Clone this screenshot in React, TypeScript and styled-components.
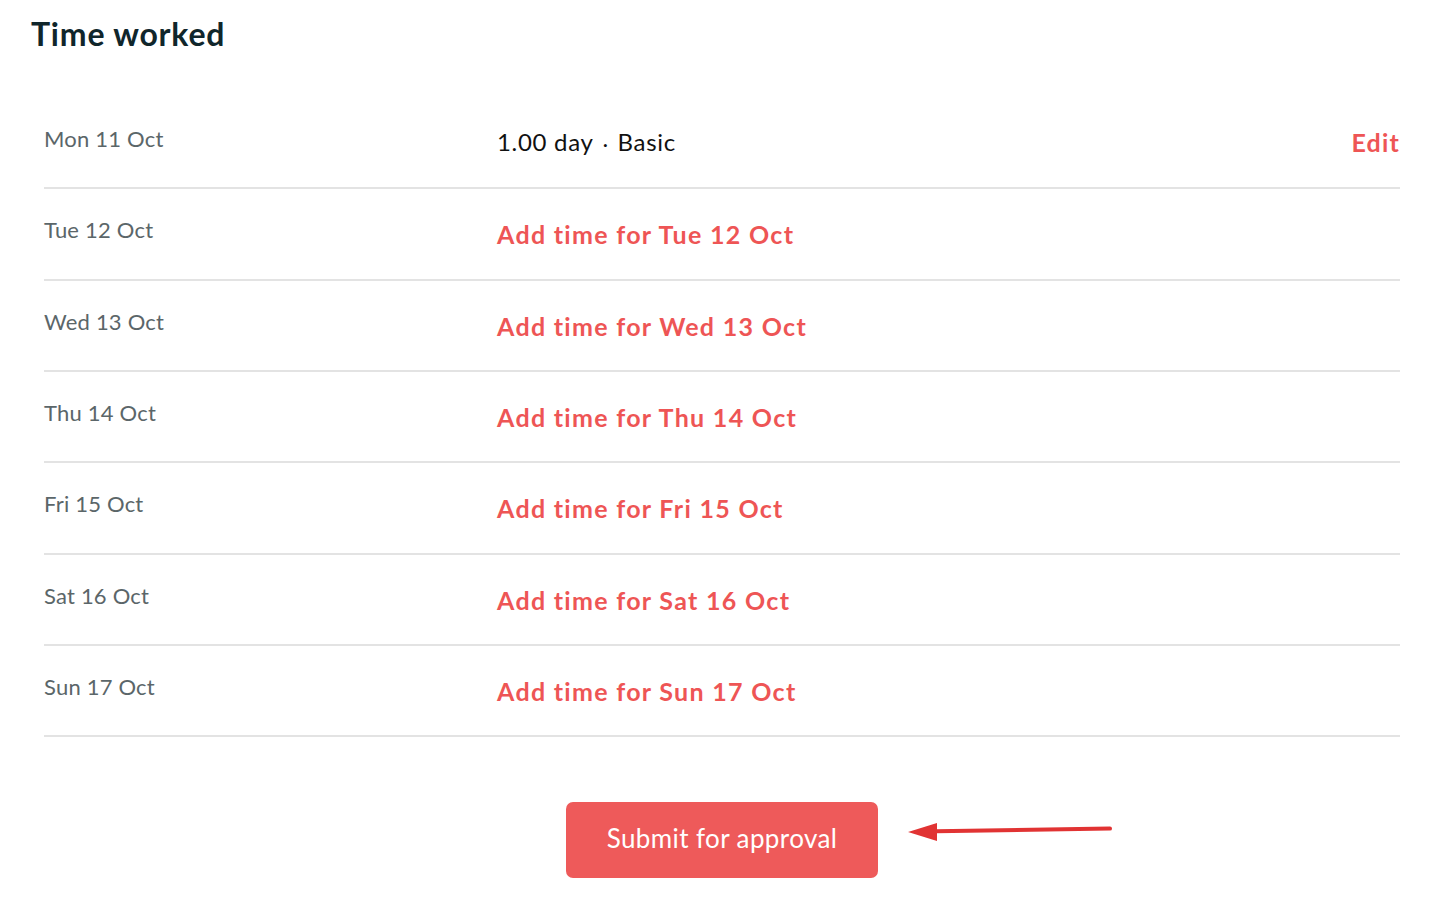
import styled, { createGlobalStyle } from "styled-components";

const GlobalStyle = createGlobalStyle`
  html, body {
    margin: 0;
    padding: 0;
    background: #ffffff;
    font-family: Lato, "Open Sans", "Liberation Sans", sans-serif;
  }
`;

type Day = {
  label: string;
  entry?: string; // 이미 입력된 시간
};

const days: Day[] = [
  { label: "Mon 11 Oct", entry: "1.00 day" },
  { label: "Tue 12 Oct" },
  { label: "Wed 13 Oct" },
  { label: "Thu 14 Oct" },
  { label: "Fri 15 Oct" },
  { label: "Sat 16 Oct" },
  { label: "Sun 17 Oct" },
];

export default function App() {
  return (
    <Page>
      <GlobalStyle />
      <Title>Time worked</Title>

      <List>
        {days.map((d) => (
          <Row key={d.label}>
            <DateLabel>{d.label}</DateLabel>
            {d.entry ? (
              <Entry>
                {d.entry}
                <Dot>·</Dot>
                Basic
              </Entry>
            ) : (
              <AddLink href="#">Add time for {d.label}</AddLink>
            )}
            {d.entry && <EditLink href="#">Edit</EditLink>}
          </Row>
        ))}
      </List>

      <Footer>
        <ButtonWrap>
          <SubmitButton type="button">Submit for approval</SubmitButton>
          <Arrow width="206" height="20" viewBox="0 0 206 20" aria-hidden>
            <path
              d="M28 9.2 L202 6.6"
              stroke="#e13333"
              strokeWidth="4"
              strokeLinecap="round"
            />
            <path d="M0 10 L29 1 L29 19 Z" fill="#e13333" />
          </Arrow>
        </ButtonWrap>
      </Footer>
    </Page>
  );
}

/* styles */
const Page = styled.div`
  width: 1447px;
  min-height: 904px;
  box-sizing: border-box;
  padding-top: 15px;
`;

const Title = styled.h1`
  margin: 0 0 0 31px;
  font-size: 32px;
  line-height: 38px;
  font-weight: 700;
  color: #10262b;
  letter-spacing: 0.8px;
`;

const List = styled.div`
  margin: 45px 47px 0 44px;
`;

const Row = styled.div`
  display: grid;
  grid-template-columns: 453px 1fr auto;
  align-items: start;
  height: 91.33px;
  box-sizing: border-box;
  padding-top: 29px;
  border-bottom: 2px solid #e3e3e3;
`;

const DateLabel = styled.span`
  font-size: 22px;
  line-height: 24px;
  color: #5b6669;
  letter-spacing: 0.2px;
`;

const Entry = styled.span`
  font-size: 24px;
  line-height: 30px;
  color: #111111;
  letter-spacing: 0.7px;
`;

const Dot = styled.span`
  margin: 0 9px;
  font-size: 20px;
`;

const AddLink = styled.a`
  font-size: 25px;
  line-height: 32px;
  font-weight: 700;
  color: #ee5555;
  text-decoration: none;
  letter-spacing: 1.3px;
`;

const EditLink = styled(AddLink)`
  text-align: right;
  line-height: 30px;
  letter-spacing: 1.2px;
`;

const Footer = styled.div`
  display: flex;
  justify-content: center;
  padding: 65px 3px 0 0;
`;

const ButtonWrap = styled.div`
  position: relative;
`;

const SubmitButton = styled.button`
  width: 312px;
  height: 76px;
  padding: 0 0 4px;
  border: none;
  border-radius: 7px;
  background: #ee5a5a;
  color: #ffffff;
  font-family: inherit;
  font-size: 26px;
  letter-spacing: 0.4px;
  cursor: pointer;
`;

/* 버튼 옆 빨간 화살표 주석 */
const Arrow = styled.svg`
  position: absolute;
  left: 342px;
  top: 20px;
`;
